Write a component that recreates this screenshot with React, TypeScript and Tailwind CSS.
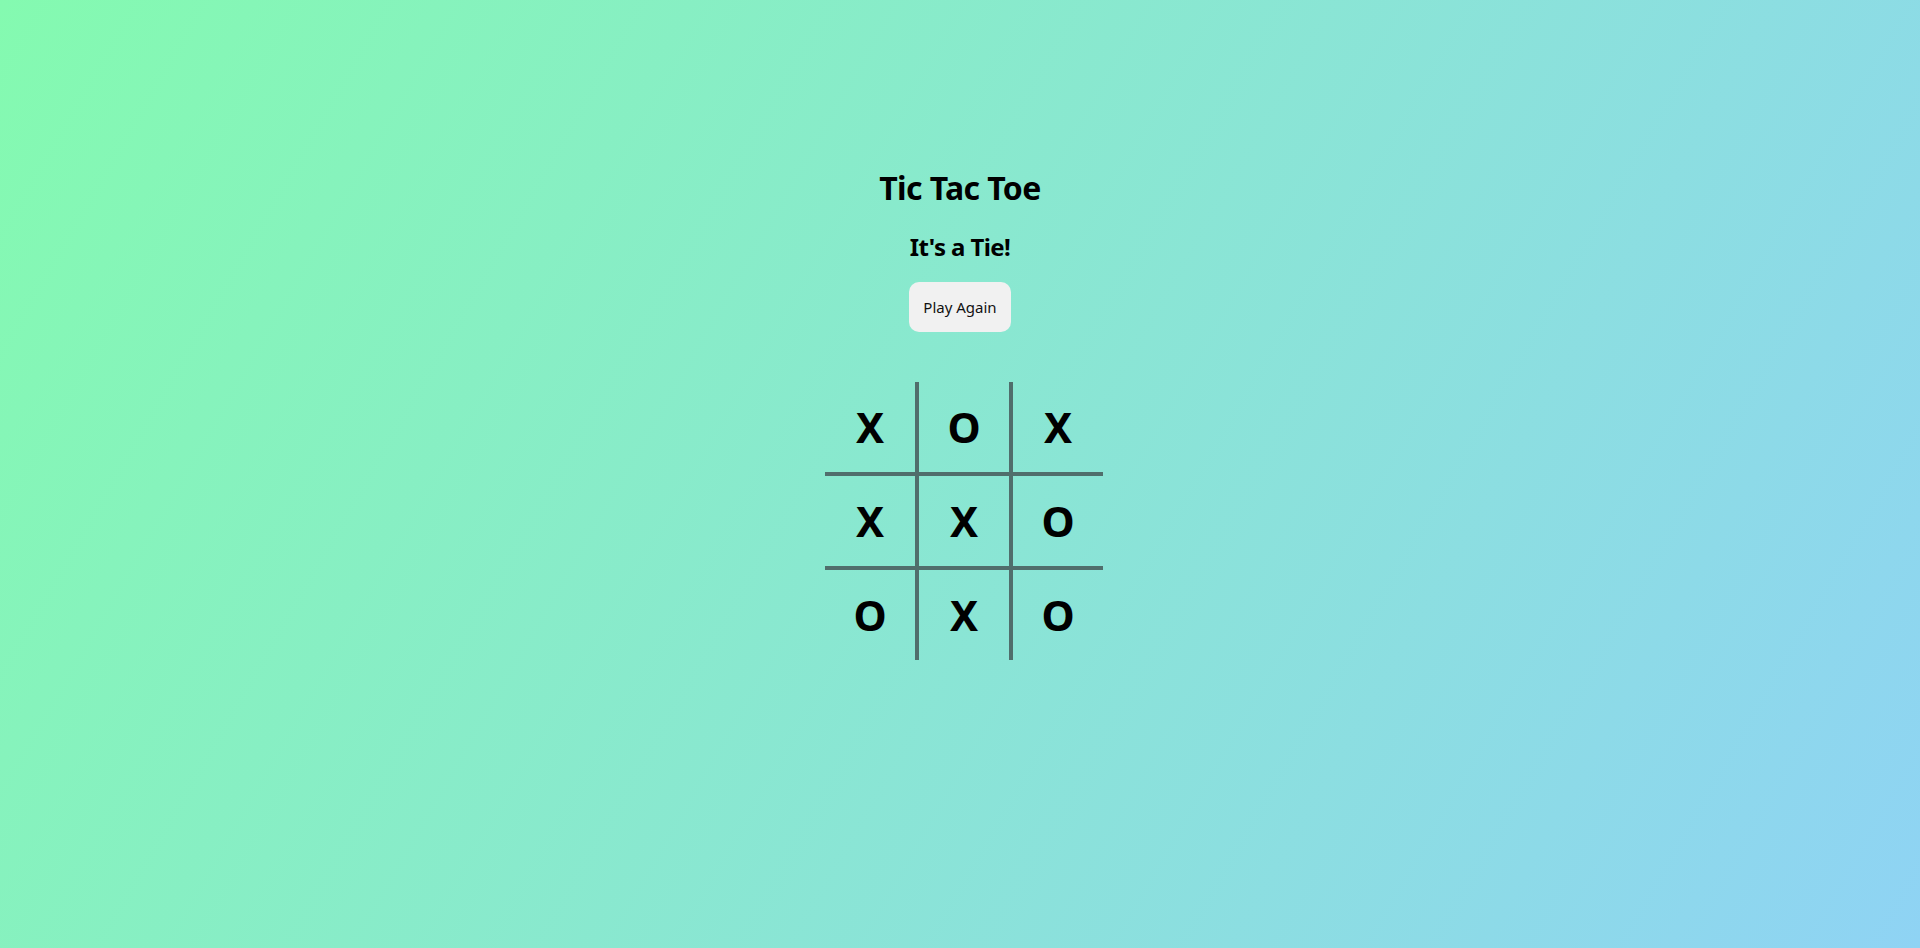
import { Fragment } from "react"

const board = ["X", "O", "X", "X", "X", "O", "O", "X", "O"]

const Line = ({ vertical }: { vertical?: boolean }) => (
  <div className={vertical ? "w-[4px] h-[90px] bg-[#506e6c]" : "h-[4px] w-full bg-[#506e6c]"} />
)

const Cell = ({ value }: { value: string }) => (
  <button className="w-[90px] h-[90px] flex items-center justify-center text-[42px] font-bold text-black leading-none">
    {value}
  </button>
)

export default function App() {
  const rows = [board.slice(0, 3), board.slice(3, 6), board.slice(6, 9)]

  return (
    <div
      className="min-h-screen w-full bg-[linear-gradient(120deg,#84fab0_0%,#8fd3f4_100%)] flex flex-col items-center text-black"
      style={{ fontFamily: '"Noto Sans", "Open Sans", sans-serif' }}
    >
      <h1 className="mt-[168px] text-[32px] leading-[40px] font-bold tracking-[-0.6px]">Tic Tac Toe</h1>
      <h2 className="mt-[23px] text-[24px] leading-[32px] font-bold tracking-[-0.6px]">It's a Tie!</h2>
      <button className="mt-[19px] w-[102px] h-[50px] rounded-[10px] bg-[#f1f1f1] text-[15px] text-[#111]">
        Play Again
      </button>

      <div className="mt-[50px] ml-[8px] w-[278px] flex flex-col">
        {rows.map((row, r) => (
          <Fragment key={r}>
            {r > 0 && <Line />}
            <div className="flex">
              {row.map((v, c) => (
                <Fragment key={c}>
                  {c > 0 && <Line vertical />}
                  <Cell value={v} />
                </Fragment>
              ))}
            </div>
          </Fragment>
        ))}
      </div>
    </div>
  )
}
